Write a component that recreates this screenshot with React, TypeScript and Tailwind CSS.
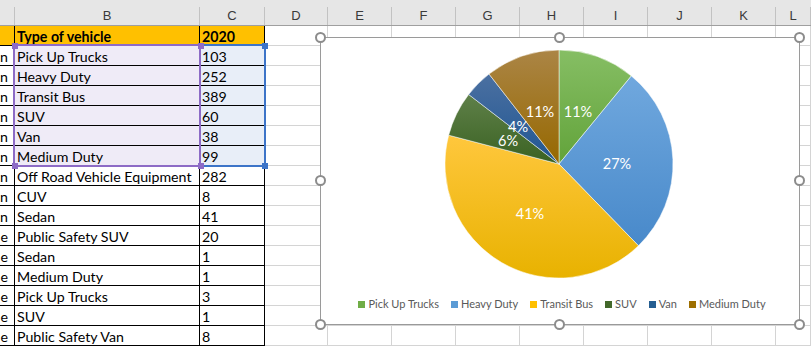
import React from "react";

const cols = [
  { key: "A", w: "w-[15px]" },
  { key: "B", w: "w-[185px]" },
  { key: "C", w: "w-[65px]" },
  { key: "D", w: "w-[63px]" },
  { key: "E", w: "w-[64px]" },
  { key: "F", w: "w-[64px]" },
  { key: "G", w: "w-[64px]" },
  { key: "H", w: "w-[64px]" },
  { key: "I", w: "w-[64px]" },
  { key: "J", w: "w-[64px]" },
  { key: "K", w: "w-[64px]" },
  { key: "L", w: "w-[35px]" },
];

const emptyCols = cols.slice(3);

const rows = [
  ["n", "Pick Up Trucks", "103"],
  ["n", "Heavy Duty", "252"],
  ["n", "Transit Bus", "389"],
  ["n", "SUV", "60"],
  ["n", "Van", "38"],
  ["n", "Medium Duty", "99"],
  ["n", "Off Road Vehicle Equipment", "282"],
  ["n", "CUV", "8"],
  ["n", "Sedan", "41"],
  ["e", "Public Safety SUV", "20"],
  ["e", "Sedan", "1"],
  ["e", "Medium Duty", "1"],
  ["e", "Pick Up Trucks", "3"],
  ["e", "SUV", "1"],
  ["e", "Public Safety Van", "8"],
];

const slices = [
  { name: "Pick Up Trucks", v: 103, top: "#86be64", bot: "#62a33a", legend: "#70ad47" },
  { name: "Heavy Duty", v: 252, top: "#70a8de", bot: "#4889ca", legend: "#5b9bd5" },
  { name: "Transit Bus", v: 389, top: "#ffc73d", bot: "#e8b200", legend: "#ffc000" },
  { name: "SUV", v: 60, top: "#5f8049", bot: "#3a6222", legend: "#43682b" },
  { name: "Van", v: 38, top: "#4b70a1", bot: "#205692", legend: "#255e91" },
  { name: "Medium Duty", v: 99, top: "#ab8545", bot: "#966800", legend: "#9e6f00" },
];

const labels = [
  { t: "11%", x: 257, y: 73 },
  { t: "27%", x: 296, y: 125 },
  { t: "41%", x: 209, y: 175 },
  { t: "6%", x: 187, y: 102 },
  { t: "4%", x: 197, y: 88 },
  { t: "11%", x: 219, y: 73 },
];

function Pie() {
  const cx = 238;
  const cy = 126;
  const r = 114;
  const total = slices.reduce((s, x) => s + x.v, 0);
  let acc = 0;
  const pt = (a: number) => [cx + r * Math.sin(a), cy - r * Math.cos(a)];
  return (
    <svg width="478" height="257" className="block">
      <defs>
        {slices.map((s, i) => (
          <linearGradient key={i} id={`g${i}`} x1="0" y1="0" x2="0" y2="1">
            <stop offset="0" stopColor={s.top} />
            <stop offset="1" stopColor={s.bot} />
          </linearGradient>
        ))}
      </defs>
      {slices.map((s, i) => {
        const a0 = (acc / total) * Math.PI * 2;
        acc += s.v;
        const a1 = (acc / total) * Math.PI * 2;
        const [x0, y0] = pt(a0);
        const [x1, y1] = pt(a1);
        const large = a1 - a0 > Math.PI ? 1 : 0;
        return (
          <path
            key={i}
            d={`M${cx} ${cy} L${x0} ${y0} A${r} ${r} 0 ${large} 1 ${x1} ${y1} Z`}
            fill={`url(#g${i})`}
            stroke="#ffffff"
            strokeWidth="0.5"
          />
        );
      })}
      {labels.map((l, i) => (
        <text
          key={i}
          x={l.x}
          y={l.y}
          textAnchor="middle"
          dominantBaseline="central"
          fill="#ffffff"
          fontSize="14.5"
          fontFamily="Lato, sans-serif"
        >
          {l.t}
        </text>
      ))}
    </svg>
  );
}

function Handle({ pos }: { pos: string }) {
  return (
    <div
      className={`absolute w-[11px] h-[11px] rounded-full bg-white border-2 border-[#8c8c8c] ${pos}`}
    />
  );
}

function Chart() {
  return (
    <div className="absolute left-[320px] top-[37px] w-[480px] h-[288px] bg-white border border-[#9a9a9a]">
      <Pie />
      <div className="h-[18px] flex items-center justify-center gap-[12px] pl-[4px] text-[11px] text-[#595959]">
        {slices.map((s) => (
          <div key={s.name} className="flex items-center gap-[3px]">
            <span className="w-[7px] h-[7px]" style={{ backgroundColor: s.legend }} />
            <span>{s.name}</span>
          </div>
        ))}
      </div>
      <Handle pos="-left-[6px] -top-[6px]" />
      <Handle pos="left-[233px] -top-[6px]" />
      <Handle pos="-right-[6px] -top-[6px]" />
      <Handle pos="-left-[6px] top-[137px]" />
      <Handle pos="-right-[6px] top-[137px]" />
      <Handle pos="-left-[6px] -bottom-[6px]" />
      <Handle pos="left-[233px] -bottom-[6px]" />
      <Handle pos="-right-[6px] -bottom-[6px]" />
    </div>
  );
}

function GridCells() {
  return (
    <>
      {emptyCols.map((c) => (
        <div
          key={c.key}
          className={`${c.w} shrink-0 h-full border-b border-r border-[#d4d4d4]`}
        />
      ))}
    </>
  );
}

export default function App() {
  return (
    <div className="relative w-[811px] h-[347px] overflow-hidden bg-white font-['Lato',sans-serif] text-black">
      {/* column headers */}
      <div className="flex h-[26px] bg-[#e6e6e6] border-b border-[#9f9f9f]">
        {cols.map((c) => (
          <div key={c.key} className={`${c.w} shrink-0 pt-[7px]`}>
            <div className="h-[18px] border-r border-[#c2c2c2] flex items-center justify-center text-[13px] text-[#3a3a3a] font-['Liberation_Sans',sans-serif]">
              {c.key === "A" ? "" : c.key}
            </div>
          </div>
        ))}
      </div>

      {/* table header row */}
      <div className="flex h-[20px] text-[14.2px] leading-[17px]">
        <div className="w-[15px] shrink-0 bg-[#ffc000] border-b border-r border-black" />
        <div className="w-[185px] shrink-0 bg-[#ffc000] border-b border-r border-black flex items-end pl-[2px] font-bold">
          Type of vehicle
        </div>
        <div className="w-[65px] shrink-0 bg-[#ffc000] border-b border-r border-black flex items-end pl-[2px] font-bold">
          2020
        </div>
        <GridCells />
      </div>

      {rows.map(([a, b, c], i) => {
        const sel = i < 6;
        return (
          <div key={i} className="flex h-[20px] text-[14.2px] leading-[17px]">
            <div className="w-[15px] shrink-0 border-b border-r border-black flex items-end justify-end pr-[6px] overflow-hidden">
              {a}
            </div>
            <div
              className={`w-[185px] shrink-0 border-b border-r border-black flex items-end pl-[2px] whitespace-nowrap ${
                sel ? "bg-[#efebf7]" : "bg-white"
              }`}
            >
              {b}
            </div>
            <div
              className={`w-[65px] shrink-0 border-b border-r border-black flex items-end pl-[2px] ${
                sel ? "bg-[#e8eef8]" : "bg-white"
              }`}
            >
              {c}
            </div>
            <GridCells />
          </div>
        );
      })}

      {/* range highlights */}
      <div className="absolute left-[199px] top-[44px] w-[67px] h-[123px] border-2 border-[#3d74c8]" />
      <div className="absolute left-[13px] top-[44px] w-[188px] h-[123px] border-2 border-[#8d6bc6]" />
      <div className="absolute left-[12px] top-[43px] w-[6px] h-[6px] bg-[#8d6bc6]" />
      <div className="absolute left-[198px] top-[43px] w-[6px] h-[6px] bg-[#8d6bc6]" />
      <div className="absolute left-[12px] top-[163px] w-[6px] h-[6px] bg-[#8d6bc6]" />
      <div className="absolute left-[198px] top-[163px] w-[6px] h-[6px] bg-[#8d6bc6]" />
      <div className="absolute left-[262px] top-[43px] w-[6px] h-[6px] bg-[#3d74c8]" />
      <div className="absolute left-[262px] top-[163px] w-[6px] h-[6px] bg-[#3d74c8]" />

      <Chart />
    </div>
  );
}
